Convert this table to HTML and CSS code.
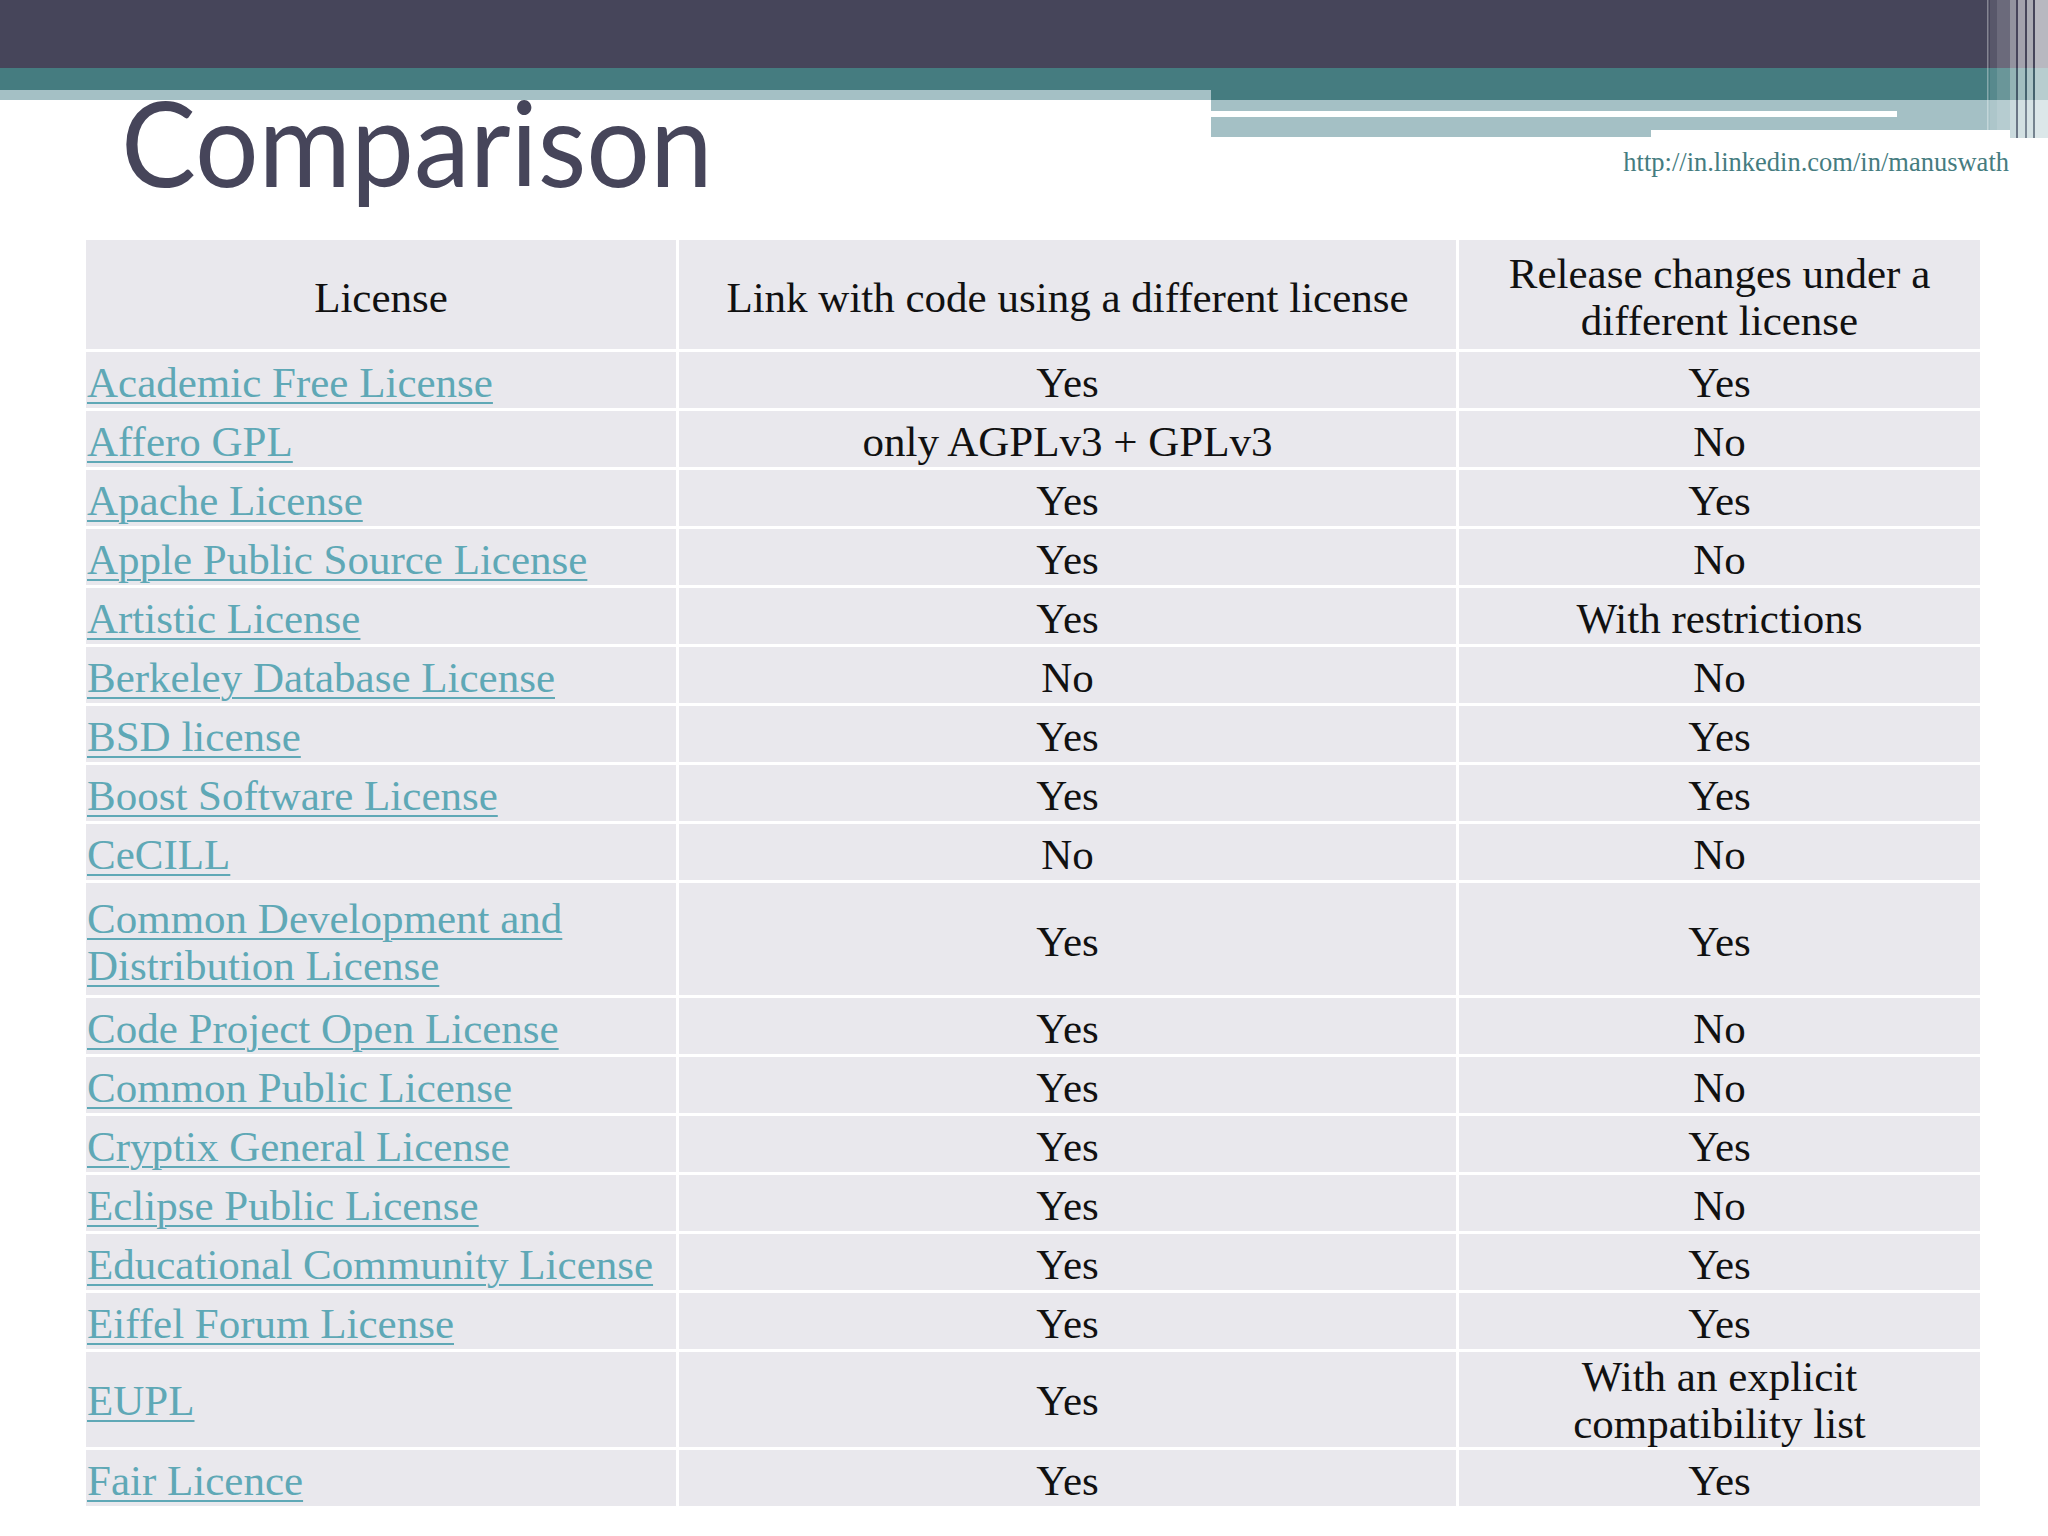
FILE: index.html
```html
<!DOCTYPE html>
<html lang="en">
<head>
<meta charset="utf-8">
<title>Comparison</title>
<link rel="stylesheet" href="styles.css">
</head>
<body>
<div class="slide">
  <header class="top">
    <div class="top-left">
      <div class="band band-dark"></div>
      <div class="band band-teal"></div>
      <div class="band band-light"></div>
      <h1 class="title"><span>Comparison</span></h1>
    </div>
    <div class="top-right">
      <svg class="deco" width="837" height="138" viewBox="0 0 837 138" aria-hidden="true">
        <rect x="0" y="0" width="837" height="68" fill="#46455a"/>
        <rect x="0" y="68" width="837" height="32" fill="#457c80"/>
        <rect x="0" y="100" width="837" height="30" fill="#a4c0c5"/>
        <rect x="0" y="130" width="440" height="7" fill="#a4c0c5"/>
        <rect x="799" y="130" width="38" height="8" fill="#a4c0c5"/>
        <rect x="0" y="111" width="686" height="6" fill="#ffffff"/>
        <rect x="776" y="0" width="1.5" height="131" fill="#ffffff" opacity="0.35"/>
        <rect x="779" y="0" width="7" height="131" fill="#ffffff" opacity="0.1"/>
        <rect x="786" y="0" width="13" height="131" fill="#ffffff" opacity="0.2"/>
        <rect x="799" y="0" width="6" height="138" fill="#ffffff" opacity="0.42"/>
        <rect x="805" y="0" width="2" height="138" fill="#46455a" opacity="0.6"/>
        <rect x="807" y="0" width="7" height="138" fill="#ffffff" opacity="0.5"/>
        <rect x="814" y="0" width="2" height="138" fill="#46455a" opacity="0.45"/>
        <rect x="816" y="0" width="6" height="138" fill="#ffffff" opacity="0.55"/>
        <rect x="822" y="0" width="2" height="138" fill="#46455a" opacity="0.5"/>
        <rect x="824" y="0" width="13" height="138" fill="#ffffff" opacity="0.62"/>
      </svg>
      <a class="credit">http://in.linkedin.com/in/manuswath</a>
    </div>
  </header>
  <main class="content">
    <table class="grid">
      <colgroup>
        <col class="c1">
        <col class="c2">
        <col class="c3">
      </colgroup>
      <tr class="head">
        <th>License</th>
        <th>Link with code using a different license</th>
        <th>Release changes under a<br>different license</th>
      </tr>
      <tr><td class="name"><a>Academic Free License</a></td><td>Yes</td><td>Yes</td></tr>
      <tr><td class="name"><a>Affero GPL</a></td><td>only AGPLv3 + GPLv3</td><td>No</td></tr>
      <tr><td class="name"><a>Apache License</a></td><td>Yes</td><td>Yes</td></tr>
      <tr><td class="name"><a>Apple Public Source License</a></td><td>Yes</td><td>No</td></tr>
      <tr><td class="name"><a>Artistic License</a></td><td>Yes</td><td>With restrictions</td></tr>
      <tr><td class="name"><a>Berkeley Database License</a></td><td>No</td><td>No</td></tr>
      <tr><td class="name"><a>BSD license</a></td><td>Yes</td><td>Yes</td></tr>
      <tr><td class="name"><a>Boost Software License</a></td><td>Yes</td><td>Yes</td></tr>
      <tr><td class="name"><a>CeCILL</a></td><td>No</td><td>No</td></tr>
      <tr class="tall"><td class="name"><a>Common Development and<br>Distribution License</a></td><td>Yes</td><td>Yes</td></tr>
      <tr><td class="name"><a>Code Project Open License</a></td><td>Yes</td><td>No</td></tr>
      <tr><td class="name"><a>Common Public License</a></td><td>Yes</td><td>No</td></tr>
      <tr><td class="name"><a>Cryptix General License</a></td><td>Yes</td><td>Yes</td></tr>
      <tr><td class="name"><a>Eclipse Public License</a></td><td>Yes</td><td>No</td></tr>
      <tr><td class="name"><a>Educational Community License</a></td><td>Yes</td><td>Yes</td></tr>
      <tr><td class="name"><a>Eiffel Forum License</a></td><td>Yes</td><td>Yes</td></tr>
      <tr class="mid"><td class="name"><a>EUPL</a></td><td>Yes</td><td>With an explicit<br>compatibility list</td></tr>
      <tr class="last"><td class="name"><a>Fair Licence</a></td><td>Yes</td><td>Yes</td></tr>
    </table>
  </main>
</div>
</body>
</html>
```

FILE: styles.css
```css
* { box-sizing: border-box; }

html, body {
  margin: 0;
  padding: 0;
  background: #ffffff;
}

body {
  width: 2048px;
  height: 1536px;
  overflow: hidden;
  font-family: "Liberation Serif", "Times New Roman", serif;
}

.top {
  display: flex;
  align-items: flex-start;
}

.top-left {
  width: 1211px;
  flex: none;
}

.band-dark { height: 68px; background: #46455a; }
.band-teal { height: 22px; background: #457c80; }
.band-light { height: 10px; background: #a4c0c5; }

.title {
  margin: 0;
  padding-left: 121px;
  font-family: Lato, "Open Sans", sans-serif;
  font-weight: 400;
  font-size: 118px;
  line-height: 83px;
  color: #46455a;
}

.title span {
  display: inline-block;
  transform: scaleX(0.952);
  transform-origin: left center;
}

.top-right {
  flex: 1;
  display: flex;
  flex-direction: column;
  align-items: flex-end;
}

.deco { display: block; }

.credit {
  margin-top: 9px;
  padding-right: 39px;
  font-family: "Liberation Serif", serif;
  font-size: 26.5px;
  line-height: 30px;
  color: #457c80;
  text-decoration: none;
}

.content {
  padding: 57px 0 0 86px;
}

.grid {
  table-layout: fixed;
  width: 1894px;
  border-collapse: separate;
  border-spacing: 0;
  font-size: 43px;
  line-height: 47px;
  color: #111111;
}

.grid .c1 { width: 593px; }
.grid .c2 { width: 780px; }
.grid .c3 { width: 521px; }

.grid th,
.grid td {
  background: #e9e8ed;
  border-right: 3px solid #ffffff;
  border-bottom: 3px solid #ffffff;
  padding: 5px 4px 0;
  text-align: center;
  vertical-align: middle;
  font-weight: 400;
}

.grid th:last-child,
.grid td:last-child { border-right: 0; }

.grid tr:last-child td { border-bottom: 0; }

.grid td.name {
  text-align: left;
  padding-left: 1px;
}

.grid .name a {
  color: #5fa8b6;
  text-decoration: underline;
  text-decoration-thickness: 2px;
  text-underline-offset: 5px;
}

.grid tr { height: 59px; }
.grid tr.head { height: 112px; }
.grid tr.tall { height: 115px; }
.grid tr.mid { height: 98px; }
.grid tr.mid td { padding-top: 1px; }
.grid tr.last { height: 56px; }
```
